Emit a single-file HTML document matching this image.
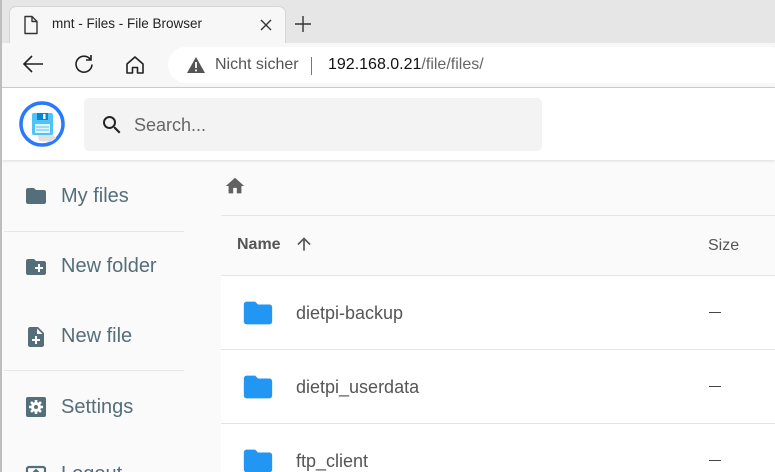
<!DOCTYPE html>
<html style="width:775px;height:472px;overflow:hidden"><head><meta charset="utf-8"><style>
*{margin:0;padding:0;box-sizing:border-box}
body{width:775px;height:472px;overflow:hidden;position:relative;background:#fafafa;font-family:"Liberation Sans",Roboto,sans-serif}
.a{position:absolute}
.sb{color:#546e7a;font-size:20px}
.row{position:absolute;left:221px;width:554px;background:#fff;border-top:1px solid #e4e4e4}
.row .t{position:absolute;left:75px;font-size:18px;color:#555}
.row .d{position:absolute;left:488px;width:12px;height:1px;background:#444}
</style></head><body>
<!-- tab strip -->
<div class="a" style="left:0;top:0;width:775px;height:43px;background:#e6e6e6"></div>
<div class="a" style="left:9px;top:6px;width:277px;height:40px;background:#f7f7f7;border-radius:7px 7px 0 0;border:1px solid #d6d6d6;border-bottom:none"></div>
<svg class="a" style="left:23px;top:15px" width="16" height="20" viewBox="0 0 16 20"><path d="M2 1.5h7l5 5v12H2z M9 1.5v5h5" fill="none" stroke="#333" stroke-width="1.4" stroke-linejoin="round"/></svg>
<div class="a" style="left:52px;top:16px;font-size:13.5px;color:#222">mnt - Files - File Browser</div>
<svg class="a" style="left:260px;top:19px" width="12" height="12"><path d="M1 1L11 11M11 1L1 11" stroke="#333" stroke-width="1.4"/></svg>
<svg class="a" style="left:294px;top:15px" width="18" height="18"><path d="M9 1V17M1 9H17" stroke="#333" stroke-width="1.4"/></svg>
<!-- toolbar -->
<div class="a" style="left:0;top:43px;width:775px;height:45px;background:#f7f7f7;border-bottom:1px solid #cfcfcf"></div>
<div class="a" style="left:0;top:0;width:2px;height:472px;background:#bdbdbd;z-index:5"></div>
<svg class="a" style="left:22px;top:54px" width="22" height="20"><path d="M21 10H2M10 2L2 10L10 18" fill="none" stroke="#222" stroke-width="1.6"/></svg>
<svg class="a" style="left:73px;top:53px" width="22" height="22"><path d="M17.5 6.5A8 8 0 1 0 19 11.5" fill="none" stroke="#222" stroke-width="1.6"/><path d="M18 2V7H13" fill="none" stroke="#222" stroke-width="1.6"/></svg>
<svg class="a" style="left:125px;top:55px" width="20" height="20"><path d="M2 9L10 2L18 9V18H12.5V12.5H7.5V18H2Z" fill="none" stroke="#222" stroke-width="1.6" stroke-linejoin="round"/></svg>
<div class="a" style="left:168px;top:47px;width:620px;height:36px;background:#fff;border-radius:18px"></div>
<svg class="a" style="left:186px;top:56px" width="20" height="18"><path d="M10 1L19 17H1Z" fill="#555"/><rect x="9.1" y="6" width="1.8" height="6" fill="#fff"/><rect x="9.1" y="13.5" width="1.8" height="1.8" fill="#fff"/></svg>
<div class="a" style="left:215px;top:56px;font-size:16px;color:#555">Nicht sicher</div>
<div class="a" style="left:311px;top:57px;width:1px;height:18px;background:#777"></div>
<div class="a" style="left:328px;top:56px;font-size:16px;color:#111">192.168.0.21<span style="color:#666">/file/files/</span></div>
<!-- header -->
<div class="a" style="left:2px;top:88px;width:773px;height:72px;background:#fff;box-shadow:0 1px 3px rgba(0,0,0,.12)"></div>
<svg class="a" style="left:19px;top:101px" width="48" height="48" viewBox="0 0 48 48"><defs><clipPath id="c"><circle cx="23" cy="23" r="20"/></clipPath></defs><circle cx="23" cy="23" r="21" fill="#fff" stroke="#2979ff" stroke-width="3.5"/><g clip-path="url(#c)"><path d="M14 14L38 38L35 41L20 40Z" fill="#e0e0e0"/></g><rect x="13" y="12" width="21" height="22" rx="2" fill="#4fc3f7"/><rect x="18" y="12" width="11" height="7" fill="#0288d1"/><rect x="24" y="13" width="2.5" height="5" fill="#fff"/><rect x="16" y="23" width="15" height="9" fill="#e1f5fe"/><path d="M17 26H30M17 29H30" stroke="#4fc3f7" stroke-width="1"/></svg>
<div class="a" style="left:84px;top:98px;width:458px;height:53px;background:#f3f3f3;border-radius:5px"></div>
<svg class="a" style="left:100px;top:113px" width="24" height="24" viewBox="0 0 24 24"><path d="M15.5 14h-.79l-.28-.27A6.470 6.470 0 0 0 16 9.5 6.5 6.5 0 1 0 9.5 16c1.61 0 3.090-.59 4.230-1.57l.27.28v.79l5 4.99L20.490 19l-4.990-5zm-6 0C7.010 14 5 11.990 5 9.5S7.010 5 9.5 5 14 7.010 14 9.5 11.990 14 9.5 14z" fill="#222"/></svg>
<div class="a" style="left:134px;top:115px;font-size:18px;color:#666">Search...</div>
<!-- sidebar -->
<svg class="a" style="left:24px;top:184px" width="24" height="24" viewBox="0 0 24 24"><path d="M10 4H4c-1.1 0-2 .9-2 2v12c0 1.1.9 2 2 2h16c1.1 0 2-.9 2-2V8c0-1.1-.9-2-2-2h-8l-2-2z" fill="#546e7a"/></svg>
<div class="a sb" style="left:61px;top:185px">My files</div>
<div class="a" style="left:4px;top:231px;width:180px;height:1px;background:#e6e6e6"></div>
<svg class="a" style="left:24px;top:255px" width="24" height="24" viewBox="0 0 24 24"><path d="M20 6h-8l-2-2H4c-1.11 0-2 .89-2 2v12c0 1.11.89 2 2 2h16c1.11 0 2-.89 2-2V8c0-1.11-.89-2-2-2zm-1 8h-3v3h-2v-3h-3v-2h3V9h2v3h3v2z" fill="#546e7a"/></svg>
<div class="a sb" style="left:61px;top:255px">New folder</div>
<svg class="a" style="left:24px;top:325px" width="24" height="24" viewBox="0 0 24 24"><path d="M14 2H6c-1.1 0-2 .9-2 2v16c0 1.1.9 2 2 2h12c1.1 0 2-.9 2-2V8l-6-6zm2 14h-3v3h-2v-3H8v-2h3v-3h2v3h3v2zm-3-7V3.5L18.5 9H13z" fill="#546e7a"/></svg>
<div class="a sb" style="left:61px;top:325px">New file</div>
<div class="a" style="left:4px;top:370px;width:180px;height:1px;background:#e6e6e6"></div>
<svg class="a" style="left:24px;top:395px" width="24" height="24" viewBox="0 0 24 24"><rect x="2" y="2" width="20" height="20" rx="2" fill="#546e7a"/><circle cx="12" cy="12" r="5" fill="#fff"/><g stroke="#fff" stroke-width="2.6"><path d="M12 5v14M5 12h14M7 7l10 10M17 7L7 17"/></g><circle cx="12" cy="12" r="2" fill="#546e7a"/></svg>
<div class="a sb" style="left:61px;top:396px">Settings</div>
<svg class="a" style="left:24px;top:464px" width="24" height="24" viewBox="0 0 24 24"><rect x="3" y="3" width="18" height="18" rx="2" fill="none" stroke="#546e7a" stroke-width="2.2"/><path d="M12 6v8M9 9l3-3 3 3" stroke="#546e7a" stroke-width="2" fill="none"/></svg>
<div class="a sb" style="left:61px;top:463px">Logout</div>
<!-- main -->
<svg class="a" style="left:224px;top:175px" width="22" height="22" viewBox="0 0 24 24"><path d="M10 20v-6h4v6h5v-8h3L12 3 2 12h3v8z" fill="#616161"/></svg>
<div class="a" style="left:221px;top:215px;width:554px;height:1px;background:#e4e4e4"></div>
<div class="a" style="left:237px;top:236px;font-size:16px;font-weight:bold;color:#555">Name</div>
<svg class="a" style="left:294px;top:234px" width="20" height="20" viewBox="0 0 24 24"><path d="M4 12l1.41 1.41L11 7.83V20h2V7.830l5.58 5.59L20 12l-8-8-8 8z" fill="#555"/></svg>
<div class="a" style="left:708px;top:237px;font-size:16px;color:#555">Size</div>
<div class="row" style="top:275px;height:75px"><svg class="a" style="left:20px;top:20px" width="34" height="34" viewBox="0 0 24 24"><path d="M10 4H4c-1.1 0-2 .9-2 2v12c0 1.1.9 2 2 2h16c1.1 0 2-.9 2-2V8c0-1.1-.9-2-2-2h-8l-2-2z" fill="#2196f3"/></svg><div class="t" style="top:27px">dietpi-backup</div><div class="d" style="top:36px"></div></div>
<div class="row" style="top:349px;height:75px"><svg class="a" style="left:20px;top:20px" width="34" height="34" viewBox="0 0 24 24"><path d="M10 4H4c-1.1 0-2 .9-2 2v12c0 1.1.9 2 2 2h16c1.1 0 2-.9 2-2V8c0-1.1-.9-2-2-2h-8l-2-2z" fill="#2196f3"/></svg><div class="t" style="top:27px">dietpi_userdata</div><div class="d" style="top:36px"></div></div>
<div class="row" style="top:423px;height:49px"><svg class="a" style="left:20px;top:20px" width="34" height="34" viewBox="0 0 24 24"><path d="M10 4H4c-1.1 0-2 .9-2 2v12c0 1.1.9 2 2 2h16c1.1 0 2-.9 2-2V8c0-1.1-.9-2-2-2h-8l-2-2z" fill="#2196f3"/></svg><div class="t" style="top:27px">ftp_client</div><div class="d" style="top:36px"></div></div>
</body></html>
